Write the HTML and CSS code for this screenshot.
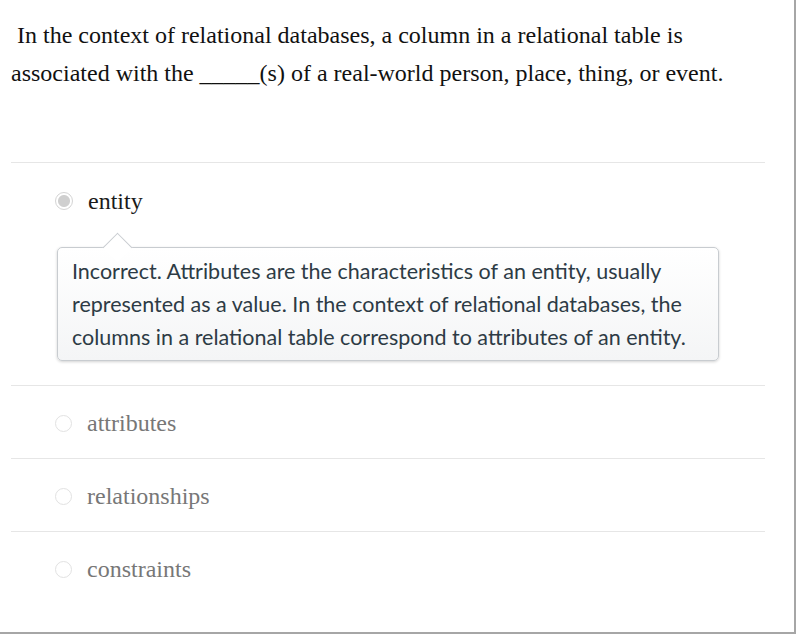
FILE: index.html
```html
<!DOCTYPE html>
<html lang="en">
<head>
  <meta charset="UTF-8" />
  <meta name="viewport" content="width=device-width, initial-scale=1.0">
  <title>Quiz Question</title>
  <link rel="stylesheet" href="styles.css">
</head>
<body>

  <div class="page">
    <!-- Question -->
    <div class="question">
      &nbsp;In the context of relational databases, a column in a relational table is
      associated with the _____(s) of a real-world person, place, thing, or event.
    </div>

    <!-- Answers -->
    <div class="answers">
      <div class="answer">
        <div class="choice selected">
          <span class="radio checked"></span>
          <span>entity</span>
        </div>
        <div class="feedback">
          Incorrect. Attributes are the characteristics of an entity, usually
          represented as a value. In the context of relational databases, the
          columns in a relational table correspond to attributes of an entity.
        </div>
      </div>

      <div class="answer">
        <div class="choice">
          <span class="radio"></span>
          <span>attributes</span>
        </div>
      </div>

      <div class="answer">
        <div class="choice">
          <span class="radio"></span>
          <span>relationships</span>
        </div>
      </div>

      <div class="answer">
        <div class="choice">
          <span class="radio"></span>
          <span>constraints</span>
        </div>
      </div>
    </div>
  </div>

</body>
</html>
```

FILE: styles.css
```css
body {
  margin: 0;
  background: #fff;
}

.page {
  width: 794px;
  height: 632px;
  border-right: 2px solid #a6a6a6;
  border-bottom: 2px solid #a6a6a6;
  overflow: hidden;
}

.question {
  font-family: "Liberation Serif", "Times New Roman", serif;
  font-size: 24px;
  line-height: 38px;
  color: #111;
  padding: 16px 0 0 11px;
  width: 730px;
}

.answers {
  margin: 70px 29px 0 11px;
}

.answer {
  border-top: 1px solid #e6e6e6;
}

.choice {
  display: flex;
  align-items: center;
  padding: 25px 0 23px 44px;
  height: 24px;
  font-family: "Liberation Serif", "Times New Roman", serif;
  font-size: 24px;
  color: #777;
}

.choice.selected {
  padding-top: 26px;
  color: #1a1a1a;
}

.radio {
  width: 17px;
  height: 17px;
  border: 1px solid #e2e2e2;
  border-radius: 50%;
  background: #fff;
  margin-right: 15px;
  box-sizing: border-box;
}

.radio.checked {
  width: 18px;
  height: 18px;
  border-color: #d4d4d4;
  background: radial-gradient(circle, #cfcfcf 0, #cfcfcf 5.5px, #fff 6.5px);
}

.feedback {
  position: relative;
  margin: 11px 46px 24px 46px;
  padding: 7px 12px 6px 14px;
  border: 1px solid #c8ccd0;
  border-radius: 5px;
  background: linear-gradient(#fff, #f4f5f6);
  box-shadow: 0 1px 3px rgba(0, 0, 0, 0.18);
  font-family: Lato, "Open Sans", sans-serif;
  font-size: 21.5px;
  line-height: 33px;
  color: #2d3b45;
}

.feedback::before {
  content: "";
  position: absolute;
  top: -11px;
  left: 49px;
  width: 20px;
  height: 20px;
  background: #fff;
  border-top: 1px solid #c8ccd0;
  border-left: 1px solid #c8ccd0;
  transform: rotate(45deg);
}
```
